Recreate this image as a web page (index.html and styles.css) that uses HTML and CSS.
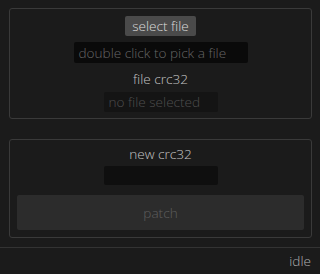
FILE: index.html
```html
<!DOCTYPE html>
<html lang="en">
<head>
    <meta charset="UTF-8">
    <meta name="viewport" content="width=device-width, initial-scale=1.0">
    <title>crc32 patcher</title>
    <link rel="stylesheet" href="styles.css">
</head>
<body>

    <div class="main">
        <!-- Source file -->
        <div class="group">
            <button class="btn" type="button">select file</button>
            <div class="edit edit-path">double click to pick a file</div>
            <div class="label label-first">file crc32</div>
            <div class="edit edit-small edit-disabled">no file selected</div>
        </div>

        <!-- Target crc -->
        <div class="group group-second">
            <div class="label label-top">new crc32</div>
            <div class="edit edit-small edit-input"></div>
            <button class="btn btn-patch" type="button" disabled>patch</button>
        </div>
    </div>

    <div class="status">idle</div>

</body>
</html>
```

FILE: styles.css
```css
html, body {
    margin: 0;
    height: 274px;
    background: #1b1b1b;
    font-family: "Open Sans", "Noto Sans", sans-serif;
    font-size: 13.6px;
    font-weight: 300;
    color: #c4c4c4;
    overflow: hidden;
}
body {
    display: flex;
    flex-direction: column;
}
.main {
    flex: 1;
    padding: 8px 8px 0 9px;
}
.group {
    display: flex;
    flex-direction: column;
    align-items: center;
    border: 1px solid #3a3a3a;
    border-radius: 3px;
    padding: 7px 7px 6px 7px;
}
.group-second {
    margin-top: 20px;
    padding-top: 5px;
    padding-bottom: 7px;
}
.btn {
    font-family: inherit;
    font-size: inherit;
    font-weight: inherit;
    border: none;
    border-radius: 2px;
    background: #4a4a4a;
    color: #dcdcdc;
    height: 20px;
    padding: 0 3px;
    line-height: 20px;
    width: 71px;
}
.edit {
    box-sizing: border-box;
    height: 21px;
    line-height: 21px;
    padding: 0 5px;
    border-radius: 2px;
    background: #0a0a0a;
    color: #666;
    white-space: nowrap;
    overflow: hidden;
}
.edit-path {
    width: 174px;
    margin-top: 6px;
}
.edit-small {
    width: 114px;
    height: 20px;
    line-height: 20px;
}
.edit-disabled {
    background: #141414;
    color: #4e4e4e;
}
.edit-input {
    margin-top: 3px;
    background: #0f0f0f;
    height: 19px;
}
.label {
    height: 18px;
    line-height: 18px;
}
.label-first {
    margin-top: 7px;
    margin-bottom: 4px;
}
.btn-patch {
    width: 100%;
    height: 35px;
    margin-top: 10px;
    background: #2c2c2c;
    color: #5e5e5e;
}
.status {
    height: 26px;
    border-top: 1px solid #333;
    text-align: right;
    padding-right: 9px;
    line-height: 26px;
    color: #b0b0b0;
}
```
